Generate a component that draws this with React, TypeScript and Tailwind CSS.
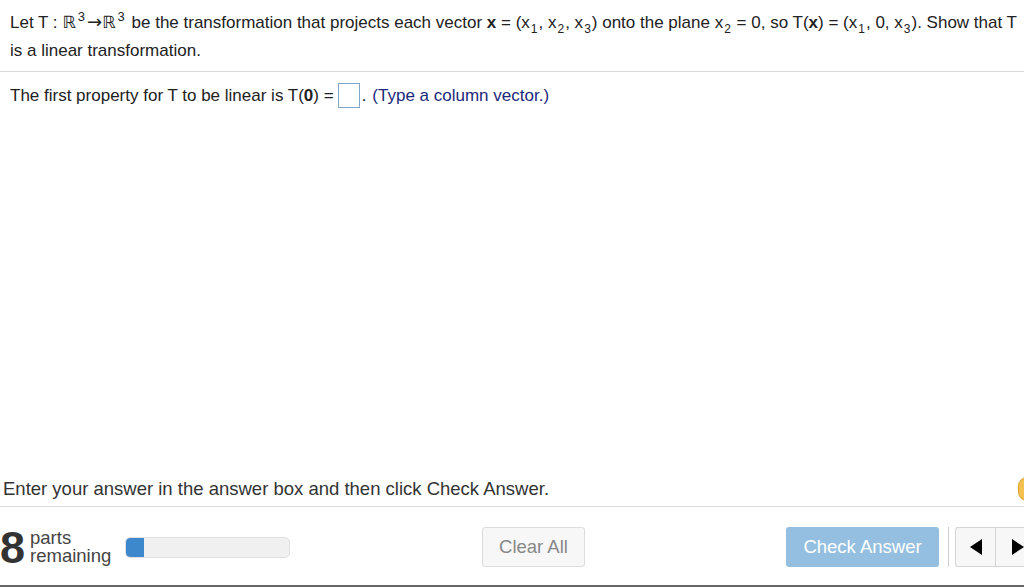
import React from "react";

function Sub({ children }: { children: React.ReactNode }) {
  return <span className="text-[12px] leading-none align-[-5px] mx-[1px]">{children}</span>;
}

function Sup({ children }: { children: React.ReactNode }) {
  return <span className="text-[13px] leading-none align-[7px] mx-[2px]">{children}</span>;
}

function Reals() {
  return (
    <span className="text-[17px] leading-none" style={{ fontFamily: '"DejaVu Sans", sans-serif' }}>
      ℝ
    </span>
  );
}

export default function App() {
  return (
    <div
      className="w-[1024px] h-[587px] bg-white overflow-hidden flex flex-col text-[#222]"
      style={{ fontFamily: '"Liberation Sans", Arial, sans-serif' }}
    >
      {/* question */}
      <div className="pl-[10px] pr-[2px] pt-[9px] text-[17px] leading-[28px] h-[71px]">
        Let T : <Reals />
        <Sup>3</Sup>
        <span className="text-[18px] leading-none" style={{ fontFamily: '"DejaVu Sans", sans-serif' }}>
          →
        </span>
        <Reals />
        <Sup>3</Sup> be the transformation that projects each vector <b>x</b> = (x<Sub>1</Sub>, x<Sub>2</Sub>, x
        <Sub>3</Sub>) onto the plane x<Sub>2</Sub> = 0, so T(<b>x</b>) = (x<Sub>1</Sub>, 0, x<Sub>3</Sub>). Show that T is a
        linear transformation.
      </div>
      <div className="h-px bg-[#d9d9d9]" />

      {/* work area */}
      <div className="flex-1 px-[10px] pt-[11px]">
        <div className="flex items-center text-[17px]">
          <span>
            The first property for T to be linear is T(<b>0</b>) =
          </span>
          <span className="ml-[4px] w-[22px] h-[25px] border border-[#7fa7c9] bg-white" />
          <span className="ml-[2px]">.</span>
          <span className="ml-[6px] text-[#1b2a7a]">(Type a column vector.)</span>
        </div>
      </div>

      {/* instruction */}
      <div className="relative flex items-center h-[34px] px-[3px] text-[18.5px] text-[#333]">
        Enter your answer in the answer box and then click Check Answer.
        <span className="absolute right-[-12px] top-[5px] w-[18px] h-[24px] rounded-full bg-[#f5c252] border border-[#d9a030]" />
      </div>
      <div className="h-px bg-[#d9d9d9]" />

      {/* footer */}
      <div className="flex items-center h-[78px] pt-[2px]">
        <div className="flex items-center w-[482px]">
          <span className="text-[45px] font-bold leading-none text-[#333]">8</span>
          <div className="ml-[5px] text-[18.5px] leading-[18px] text-[#444] flex flex-col">
            <span>parts</span>
            <span>remaining</span>
          </div>
          <div className="ml-[14px] w-[165px] h-[21px] rounded-[5px] bg-[#f0f0f0] border border-[#e0e0e0] overflow-hidden">
            <div className="w-[18px] h-full bg-[#3d87cc] rounded-l-[4px]" />
          </div>
        </div>
        <button className="w-[103px] h-[40px] rounded-[3px] border border-[#dcdcdc] bg-[#f7f7f7] text-[18.5px] text-[#888]">
          Clear All
        </button>
        <div className="flex-1" />
        <button className="w-[153px] h-[40px] rounded-[3px] bg-[#95bfe0] text-[18.5px] text-white">
          Check Answer
        </button>
        <div className="ml-[9px] w-px h-[40px] bg-[#cfcfcf]" />
        <div className="ml-[6px] flex h-[40px] w-[69px] border border-[#d5d5d5] border-r-0 rounded-l-[3px] bg-[#f7f7f7] overflow-hidden">
          <div className="w-[45px] flex items-center justify-center border-r border-[#d5d5d5]">
            <svg width="12" height="16" viewBox="0 0 12 16">
              <path d="M12 0 L0 8 L12 16 Z" fill="#000" />
            </svg>
          </div>
          <div className="flex-1 flex items-center pl-[16px]">
            <svg width="12" height="16" viewBox="0 0 12 16">
              <path d="M0 0 L12 8 L0 16 Z" fill="#000" />
            </svg>
          </div>
        </div>
      </div>
      <div className="h-[2px] bg-[#666]" />
    </div>
  );
}
